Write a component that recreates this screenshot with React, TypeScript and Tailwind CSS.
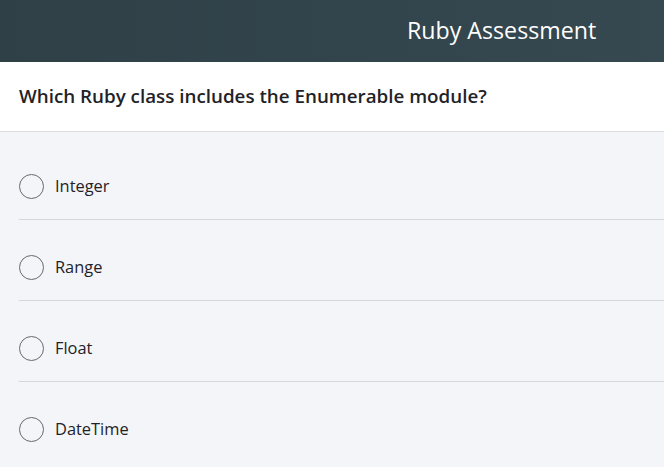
const options = ["Integer", "Range", "Float", "DateTime"];

export default function App() {
  return (
    <div className="min-h-screen bg-[#f3f5f8] font-['Open_Sans',sans-serif]">
      {/* Header */}
      <header className="flex h-[62px] items-center bg-gradient-to-r from-[#2f4047] to-[#364950] pl-[407px]">
        <h1 className="text-[23.2px] font-normal leading-none text-white">Ruby Assessment</h1>
      </header>

      {/* Question */}
      <div className="flex h-[70px] items-center border-b border-[#dcdfe2] bg-white px-[19px]">
        <h2 className="text-[18.8px] font-semibold text-[#1f2328]">
          Which Ruby class includes the Enumerable module?
        </h2>
      </div>

      {/* Options */}
      <ul className="pl-[19px] pt-[7px]">
        {options.map((option, index) => (
          <li
            key={option}
            className={
              index < options.length - 1
                ? "flex items-center gap-[11px] border-b border-[#d5d8db] pb-[20px] pt-[35px]"
                : "flex items-center gap-[11px] pb-[20px] pt-[35px]"
            }
          >
            <span className="h-[25px] w-[25px] shrink-0 rounded-full border-[1.5px] border-[#666a6e]" />
            <span className="text-[16.4px] text-[#1f2328]">{option}</span>
          </li>
        ))}
      </ul>
    </div>
  );
}
